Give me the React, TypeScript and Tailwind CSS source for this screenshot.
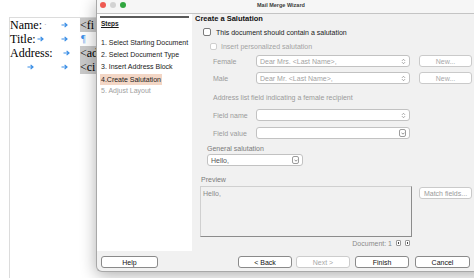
import React from 'react';

const TabArrow = () => (
  <svg width="7" height="6" viewBox="0 0 7 6" className="shrink-0">
    <path d="M0.5 3H6M3.6 0.9L6 3L3.6 5.1" stroke="#3a8ee6" strokeWidth="1.2" fill="none" />
  </svg>
);

const UpDown = () => (
  <svg width="5" height="7" viewBox="0 0 5 7" className="shrink-0">
    <path d="M1 2.8L2.5 1.3L4 2.8M1 4.2L2.5 5.7L4 4.2" fill="none" stroke="#8a8a8a" strokeWidth="0.8" />
  </svg>
);

const DownBox = () => (
  <span className="w-[7px] h-[8px] rounded-[2px] border border-[#9c9c9c] bg-white flex items-center justify-center shrink-0">
    <svg width="4" height="3" viewBox="0 0 4 3">
      <path d="M0.5 0.7L2 2.2L3.5 0.7" fill="none" stroke="#777" strokeWidth="0.8" />
    </svg>
  </span>
);

function Page() {
  return (
    <div className="ml-[9px] mt-[17px] h-[261px] border-l border-t border-[#dcdcdc] font-['Liberation_Serif',serif] text-[12px] leading-[14px] text-black">
      {/* Name row */}
      <div className="flex h-[14px] items-center">
        <span className="w-[34px]">Name:</span>
        <span className="w-[17px] text-[#999] text-[8px]">·</span>
        <span className="w-[19px] flex"><TabArrow /></span>
        <span className="w-[40px] h-[14px] bg-[#c9c9c9]">&lt;fi</span>
      </div>
      {/* Title row */}
      <div className="flex h-[14px] items-center">
        <span className="w-[27px]">Title:</span>
        <span className="w-[24px] flex"><TabArrow /></span>
        <span className="w-[19px] flex"><TabArrow /></span>
        <span className="pl-[1px] text-[#3a8ee6] text-[10px]">¶</span>
      </div>
      {/* Address row */}
      <div className="flex h-[14px] items-center">
        <span className="w-[53px]">Address:</span>
        <span className="w-[17px] flex"><TabArrow /></span>
        <span className="w-[40px] h-[14px] bg-[#c9c9c9]">&lt;ad</span>
      </div>
      {/* City row */}
      <div className="flex h-[14px] items-center">
        <span className="w-[17px]" />
        <span className="w-[34px] flex"><TabArrow /></span>
        <span className="w-[19px] flex"><TabArrow /></span>
        <span className="w-[40px] h-[14px] bg-[#c9c9c9]">&lt;ci</span>
      </div>
    </div>
  );
}

function Combo({ text, arrow }: { text?: string; arrow: 'updown' | 'down' }) {
  return (
    <div className="w-[154px] h-[12px] rounded-[3px] border border-[#c2c2c2] bg-white flex items-center pl-[3px] pr-[3px]">
      <span className="flex-1 text-[#a3a3a3]">{text}</span>
      {arrow === 'updown' ? <UpDown /> : <DownBox />}
    </div>
  );
}

function Btn({ label, className }: { label: string; className: string }) {
  return (
    <div className={`h-[12px] rounded-[3px] border bg-white flex items-center justify-center ${className}`}>
      {label}
    </div>
  );
}

function Wizard() {
  return (
    <div className="absolute left-[96px] top-0 w-[392px] h-[272px] flex flex-col bg-[#f1f1f1] border-l border-b border-[#a8a8a8] rounded-bl-[6px] shadow-[0_3px_16px_rgba(0,0,0,0.32)] font-['Liberation_Sans',Arial,sans-serif] text-[7px] leading-[9px] text-[#1a1a1a]">
      {/* title bar */}
      <div className="h-[14px] shrink-0 border-b border-[#c4c4c4] bg-[#f6f6f6] flex items-start pt-[2px] pl-[3px]">
        <span className="w-[6px] h-[6px] rounded-full bg-[#ee5a52]" />
        <span className="ml-[4px] w-[6px] h-[6px] rounded-full bg-[#d3d3d3]" />
        <span className="ml-[4px] w-[6px] h-[6px] rounded-full bg-[#31a63f]" />
        <span className="ml-[131px] text-[5.5px] leading-[6px] font-bold text-[#3a3a3a]">Mail Merge Wizard</span>
      </div>

      {/* main area */}
      <div className="flex h-[237px] shrink-0">
        {/* steps */}
        <div className="w-[95px] bg-white pt-[2px] px-[3px]">
          <div className="border-t-2 border-[#5a5a5a]">
            <div className="h-[12px] leading-[12px] pl-[1px] font-bold text-[6.5px] underline">Steps</div>
            <div className="mt-[7px] flex flex-col">
              <div className="h-[12px] leading-[12px] pl-[1px]">1. Select Starting Document</div>
              <div className="h-[12px] leading-[12px] pl-[1px]">2. Select Document Type</div>
              <div className="h-[12px] leading-[12px] pl-[1px]">3. Insert Address Block</div>
              <div className="h-[12px] flex items-center">
                <span className="h-[11px] leading-[11px] px-[1px] bg-[#f3d6c5]">4.Create Salutation</span>
              </div>
              <div className="h-[12px] leading-[12px] pl-[1px] text-[#a0a0a0]">5. Adjust Layout</div>
            </div>
          </div>
        </div>

        {/* content */}
        <div className="flex-1 flex flex-col pl-[3px]">
          <div className="h-[10px] leading-[10px] font-bold text-[7.5px] text-[#111]">Create a Salutation</div>

          <div className="mt-[2px] h-[12px] flex items-center pl-[8px]">
            <span className="w-[8px] h-[8px] rounded-[2px] border border-[#7a7a7a] bg-white" />
            <span className="ml-[5px]">This document should contain a salutation</span>
          </div>

          <div className="mt-[2px] h-[12px] flex items-center pl-[15px]">
            <span className="w-[7px] h-[7px] rounded-[2px] border border-[#cfcfcf] bg-white" />
            <span className="ml-[4px] text-[#a3a3a3]">Insert personalized salutation</span>
          </div>

          <div className="mt-[3px] h-[12px] flex items-center pl-[18px]">
            <span className="w-[43px] text-[#9a9a9a]">Female</span>
            <Combo text="Dear Mrs. <Last Name>," arrow="updown" />
            <Btn label="New..." className="ml-[9px] w-[53px] border-[#cacaca] text-[#a8a8a8]" />
          </div>

          <div className="mt-[5px] h-[12px] flex items-center pl-[18px]">
            <span className="w-[43px] text-[#9a9a9a]">Male</span>
            <Combo text="Dear Mr. <Last Name>," arrow="updown" />
            <Btn label="New..." className="ml-[9px] w-[53px] border-[#cacaca] text-[#a8a8a8]" />
          </div>

          <div className="mt-[7px] h-[12px] flex items-center pl-[18px] text-[#9a9a9a]">
            Address list field indicating a female recipient
          </div>

          <div className="mt-[6px] h-[12px] flex items-center pl-[18px]">
            <span className="w-[43px] text-[#9a9a9a]">Field name</span>
            <Combo arrow="updown" />
          </div>

          <div className="mt-[6px] h-[12px] flex items-center pl-[18px]">
            <span className="w-[43px] text-[#9a9a9a]">Field value</span>
            <Combo arrow="down" />
          </div>

          <div className="mt-[3px] h-[12px] flex items-center pl-[12px] text-[#7a7a7a]">General salutation</div>

          <div className="h-[12px] flex items-center pl-[12px]">
            <div className="w-[96px] h-[12px] rounded-[3px] border border-[#c2c2c2] bg-white flex items-center pl-[3px] pr-[3px]">
              <span className="flex-1 text-[#555]">Hello,</span>
              <DownBox />
            </div>
          </div>

          <div className="mt-[7px] h-[12px] flex items-center pl-[6px] text-[#7a7a7a]">Preview</div>

          <div className="mt-[1px] flex items-start pl-[5px]">
            <div className="w-[212px] h-[51px] border border-[#d0d0d0] border-r-[#8c8c8c] border-b-[#8c8c8c] bg-[#f1f1f1] pl-[2px] pt-[2px] text-[#8a8a8a]">
              Hello,
            </div>
            <Btn label="Match fields..." className="ml-[7px] mt-[1px] w-[53px] h-[11px] border-[#cacaca] text-[#9a9a9a]" />
          </div>

          <div className="mt-[1px] h-[10px] w-[215px] flex items-center justify-end text-[#8a8a8a]">
            <span>Document: 1</span>
            <span className="ml-[4px] w-[5px] h-[6px] rounded-[1px] border border-[#9a9a9a] bg-white flex items-center justify-center">
              <span className="w-[1px] h-[2px] bg-[#444]" />
            </span>
            <span className="ml-[4px] w-[5px] h-[6px] rounded-[1px] border border-[#9a9a9a] bg-white flex items-center justify-center">
              <span className="w-[1px] h-[2px] bg-[#444]" />
            </span>
          </div>
        </div>
      </div>

      {/* buttons */}
      <div className="h-[20px] shrink-0 flex items-start pt-[5px] pl-[4px] text-[#111]">
        <Btn label="Help" className="w-[57px] border-[#8a8a8a]" />
        <Btn label="< Back" className="ml-[80px] w-[54px] border-[#8a8a8a]" />
        <Btn label="Next >" className="ml-[4px] w-[54px] border-[#cccccc] text-[#a8a8a8]" />
        <Btn label="Finish" className="ml-[5px] w-[54px] border-[#8a8a8a]" />
        <Btn label="Cancel" className="ml-[6px] w-[55px] border-[#8a8a8a]" />
      </div>
    </div>
  );
}

export default function App() {
  return (
    <div className="relative w-[474px] h-[278px] overflow-hidden bg-white">
      <Page />
      <Wizard />
    </div>
  );
}
